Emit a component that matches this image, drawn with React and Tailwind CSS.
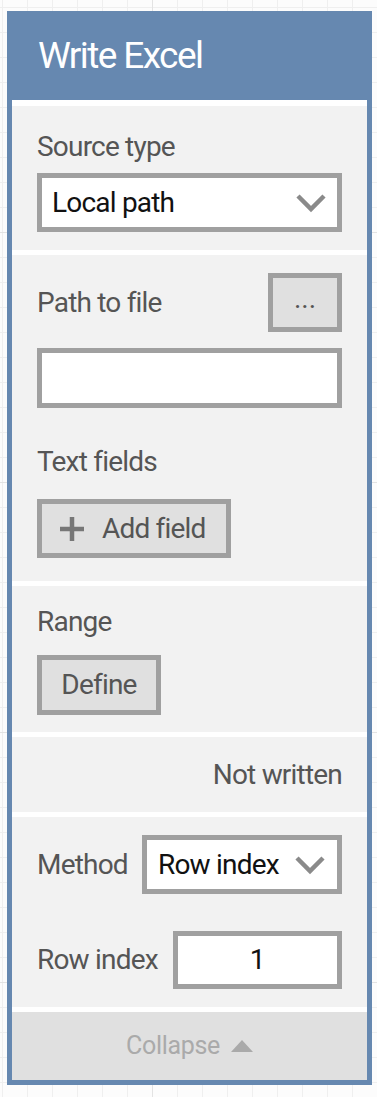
import React from "react";

const font = "font-['Roboto','Liberation_Sans',sans-serif]";

function Chevron() {
  return (
    <svg width="32" height="20" viewBox="0 0 32 20" className="shrink-0">
      <path d="M3 3 L16 16 L29 3" fill="none" stroke="#8a8a8a" strokeWidth="4.5" strokeLinecap="butt" strokeLinejoin="miter" />
    </svg>
  );
}

function Label({ children }) {
  return <div className="text-[28px] leading-[32px] tracking-[-0.8px] text-[#555555]">{children}</div>;
}

export default function App() {
  return (
    <div
      className={`${font} min-h-screen w-full pl-[7px] pt-[11px] pb-[12px] bg-[#fcfcfc] bg-[image:linear-gradient(to_right,#e3e3e3_1px,transparent_1px),linear-gradient(to_bottom,#e3e3e3_1px,transparent_1px),linear-gradient(to_right,#efefef_1px,transparent_1px),linear-gradient(to_bottom,#efefef_1px,transparent_1px)] [background-size:250px_250px,250px_250px,25px_25px,25px_25px] [background-position:152px_232px,152px_232px,2px_7px,2px_7px]`}
    >
      <div className="w-[365px] bg-[#6688b0] px-[5px] pb-[5px]">
        <div className="h-[89px] flex items-center pl-[26px] text-[37px] tracking-[-1.6px] text-white">Write Excel</div>
        <div className="bg-white flex flex-col gap-[5px] pt-[6px]">
          {/* Section 1 */}
          <div className="bg-[#f2f2f2] px-[25px] pt-[25px] pb-[18px]">
            <Label>Source type</Label>
            <div className="mt-[10px] h-[59px] border-[5px] border-[#a0a0a0] bg-white flex items-center justify-between pl-[10px] pr-[10px]">
              <span className="text-[28px] tracking-[-0.8px] text-[#111111]">Local path</span>
              <Chevron />
            </div>
          </div>

          {/* Section 2 */}
          <div className="bg-[#f2f2f2] px-[25px] pt-[18px] pb-[23px]">
            <div className="flex items-center justify-between">
              <Label>Path to file</Label>
              <button className="w-[74px] h-[59px] border-[5px] border-[#a0a0a0] bg-[#e0e0e0] text-[28px] leading-none text-[#555555] flex items-center justify-center pb-[8px]">
                ...
              </button>
            </div>
            <div className="mt-[16px] h-[60px] border-[5px] border-[#a0a0a0] bg-white"></div>
            <div className="mt-[38px]">
              <Label>Text fields</Label>
            </div>
            <button className="mt-[21px] w-[194px] h-[59px] border-[5px] border-[#a0a0a0] bg-[#e0e0e0] flex items-center pl-[17px]">
              <svg width="26" height="26" viewBox="0 0 26 26" className="shrink-0">
                <path d="M13 1 V25 M1 13 H25" stroke="#777777" strokeWidth="4.5" fill="none" />
              </svg>
              <span className="ml-[17px] text-[28px] tracking-[-0.8px] text-[#555555]">Add field</span>
            </button>
          </div>

          {/* Section 3 */}
          <div className="bg-[#f2f2f2] px-[25px] pt-[20px] pb-[17px]">
            <Label>Range</Label>
            <button className="mt-[17px] w-[124px] h-[60px] border-[5px] border-[#a0a0a0] bg-[#e0e0e0] flex items-center justify-center text-[28px] tracking-[-0.8px] text-[#555555]">
              Define
            </button>
          </div>

          {/* Section 4 */}
          <div className="bg-[#f2f2f2] h-[75px] px-[25px] flex items-center justify-end">
            <Label>Not written</Label>
          </div>

          {/* Section 5 */}
          <div className="bg-[#f2f2f2] px-[25px] pt-[18px] pb-[18px]">
            <div className="flex items-center justify-between">
              <Label>Method</Label>
              <div className="w-[200px] h-[59px] border-[5px] border-[#a0a0a0] bg-white flex items-center justify-between pl-[11px] pr-[11px]">
                <span className="text-[28px] tracking-[-0.8px] text-[#111111]">Row index</span>
                <Chevron />
              </div>
            </div>
            <div className="mt-[37px] flex items-center justify-between">
              <Label>Row index</Label>
              <div className="w-[169px] h-[58px] border-[5px] border-[#a0a0a0] bg-white flex items-center justify-center text-[28px] text-[#111111]">
                1
              </div>
            </div>
          </div>

          {/* Collapse */}
          <div className="bg-[#e0e0e0] h-[68px] flex items-center justify-center gap-[11px]">
            <span className="text-[25px] tracking-[-0.3px] text-[#aaaaaa]">Collapse</span>
            <svg width="22" height="12" viewBox="0 0 22 12" className="shrink-0">
              <path d="M0 12 L11 0 L22 12 Z" fill="#aaaaaa" />
            </svg>
          </div>
        </div>
      </div>
    </div>
  );
}
